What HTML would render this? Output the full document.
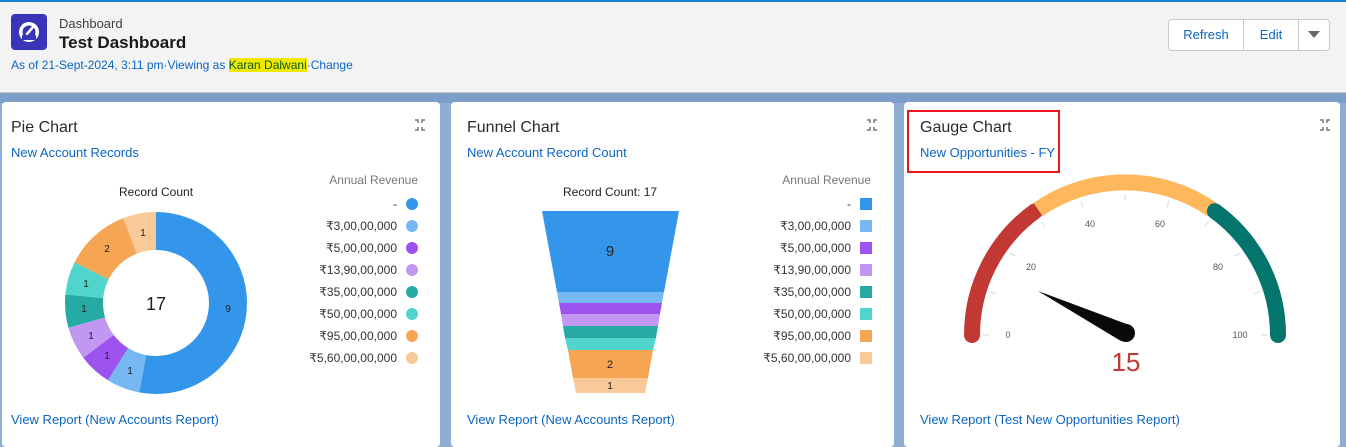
<!DOCTYPE html>
<html><head><meta charset="utf-8"><style>
*{margin:0;padding:0;box-sizing:border-box}
body{width:1346px;height:442px;overflow:hidden;background:#8eaed3;font-family:"Liberation Sans",Arial,sans-serif;position:relative}
.hdr{position:absolute;left:0;top:0;width:1346px;height:93px;background:#f3f3f3;border-top:2px solid #1b7fd6;border-bottom:1px solid #c9c9c9}
.band{position:absolute;left:0;top:93px;width:1346px;height:10px;background:#7c9ec8}
.card{position:absolute;top:102px;height:345px;background:#fff;border-radius:4px}
.t{position:absolute;font-size:16px;color:#2b2b2b}
.l{position:absolute;font-size:13px;color:#0b65c2}
.a{position:absolute;font-size:12px;color:#222}
.btn{position:absolute;top:17px;height:32px;border:1px solid #c9c9c9;background:#fff;color:#0b65c2;font-size:13px;text-align:center;line-height:30px}
</style></head><body>
<div class="hdr">
 <div style="position:absolute;left:11px;top:12px;width:36px;height:36px;background:#3934b8;border-radius:4px"></div>
 <svg style="position:absolute;left:11px;top:12px" width="36" height="36"><circle cx="18" cy="18" r="10" fill="#fff"/><circle cx="18" cy="18" r="6.5" fill="#3934b8"/><path d="M16 20 L22 13" stroke="#fff" stroke-width="2.5" stroke-linecap="round"/><rect x="11" y="21" width="14" height="5" fill="#3934b8"/></svg>
 <div style="position:absolute;left:59px;top:14px;font-size:13px;color:#3e3e3e">Dashboard</div>
 <div style="position:absolute;left:59px;top:31px;font-size:17px;font-weight:bold;color:#181818">Test Dashboard</div>
 <div style="position:absolute;left:11px;top:56px;font-size:12px;color:#0b65c2;white-space:nowrap">As of 21-Sept-2024, 3:11 pm·Viewing as <span style="background:#f0e800;color:#0a5a1a">Karan Dalwani</span>·Change</div>
 <div class="btn" style="left:1168px;width:76px;border-radius:4px 0 0 4px">Refresh</div>
 <div class="btn" style="left:1243px;width:56px">Edit</div>
 <div class="btn" style="left:1298px;width:32px;border-radius:0 4px 4px 0"><svg width="12" height="8" style="margin-top:11px;display:block;margin-left:9px"><path d="M0 0H12L6 7Z" fill="#666"/></svg></div>
</div>
<div class="band"></div>

<!-- Card 1 -->
<div class="card" style="left:2px;width:438px"></div>
<div class="t" style="left:11px;top:119px">Pie Chart</div>
<div class="l" style="left:11px;top:145px">New Account Records</div>
<div class="l" style="left:11px;top:412px">View Report (New Accounts Report)</div>
<div class="a" style="left:119px;top:185px">Record Count</div>
<svg style="position:absolute;left:0;top:0" width="1346" height="442">
 <g transform="rotate(-90 156 303)" fill="none" stroke-width="38">
  <circle cx="156" cy="303" r="72" stroke="#3496ea" stroke-dasharray="239.5 500"/>
  <circle cx="156" cy="303" r="72" stroke="#77b8f3" stroke-dasharray="26.6 500" stroke-dashoffset="-239.5"/>
  <circle cx="156" cy="303" r="72" stroke="#9c53ef" stroke-dasharray="26.6 500" stroke-dashoffset="-266.1"/>
  <circle cx="156" cy="303" r="72" stroke="#c297f2" stroke-dasharray="26.6 500" stroke-dashoffset="-292.7"/>
  <circle cx="156" cy="303" r="72" stroke="#25aba3" stroke-dasharray="26.6 500" stroke-dashoffset="-319.3"/>
  <circle cx="156" cy="303" r="72" stroke="#4fd5cb" stroke-dasharray="26.6 500" stroke-dashoffset="-345.9"/>
  <circle cx="156" cy="303" r="72" stroke="#f5a553" stroke-dasharray="53.2 500" stroke-dashoffset="-372.5"/>
  <circle cx="156" cy="303" r="72" stroke="#f9ca98" stroke-dasharray="26.7 500" stroke-dashoffset="-425.7"/>
 </g>
 <g font-size="10" fill="#222" text-anchor="middle" font-family="Liberation Sans">
  <text x="228" y="312">9</text><text x="130" y="374">1</text><text x="107" y="359">1</text><text x="91" y="339">1</text><text x="84" y="312">1</text><text x="86" y="287">1</text><text x="107" y="252">2</text><text x="143" y="236">1</text>
 </g>
 <text x="156" y="310" font-size="18" fill="#222" text-anchor="middle" font-family="Liberation Sans">17</text>
 <g font-size="12" fill="#333" text-anchor="end" font-family="Liberation Sans">
  <text x="418" y="184" fill="#777">Annual Revenue</text>
  <text x="397" y="208">-</text><text x="397" y="230">₹3,00,00,000</text><text x="397" y="252">₹5,00,00,000</text><text x="397" y="274">₹13,90,00,000</text><text x="397" y="296">₹35,00,00,000</text><text x="397" y="318">₹50,00,00,000</text><text x="397" y="340">₹95,00,00,000</text><text x="397" y="362">₹5,60,00,00,000</text>
 </g>
 <circle cx="412" cy="204" r="6" fill="#3496ea"/><circle cx="412" cy="226" r="6" fill="#77b8f3"/><circle cx="412" cy="248" r="6" fill="#9c53ef"/><circle cx="412" cy="270" r="6" fill="#c297f2"/><circle cx="412" cy="292" r="6" fill="#25aba3"/><circle cx="412" cy="314" r="6" fill="#4fd5cb"/><circle cx="412" cy="336" r="6" fill="#f5a553"/><circle cx="412" cy="358" r="6" fill="#f9ca98"/>
</svg>

<!-- Card 2 -->
<div class="card" style="left:451px;width:443px"></div>
<div class="t" style="left:467px;top:119px">Funnel Chart</div>
<div class="l" style="left:467px;top:145px">New Account Record Count</div>
<div class="l" style="left:467px;top:412px">View Report (New Accounts Report)</div>
<div class="a" style="left:563px;top:185px">Record Count: 17</div>
<svg style="position:absolute;left:0;top:0" width="1346" height="442">
 <polygon points="542,211 679,211 664,292 557,292" fill="#3496ea"/>
 <polygon points="557,292 664,292 662,303 559,303" fill="#77b8f3"/>
 <polygon points="559,303 662,303 660,314 561,314" fill="#9c53ef"/>
 <polygon points="561,314 660,314 658,326 563,326" fill="#c297f2"/>
 <polygon points="563,326 658,326 656,338 565,338" fill="#25aba3"/>
 <polygon points="565,338 656,338 653,350 568,350" fill="#4fd5cb"/>
 <polygon points="568,350 653,350 648,378 573,378" fill="#f5a553"/>
 <polygon points="573,378 648,378 645,393 576,393" fill="#f9ca98"/>
 <g fill="#222" text-anchor="middle" font-family="Liberation Sans">
  <text x="610" y="256" font-size="15">9</text><text x="610" y="368" font-size="11">2</text><text x="610" y="389" font-size="10">1</text>
 </g>
 <g font-size="12" fill="#333" text-anchor="end" font-family="Liberation Sans">
  <text x="871" y="184" fill="#777">Annual Revenue</text>
  <text x="851" y="208">-</text><text x="851" y="230">₹3,00,00,000</text><text x="851" y="252">₹5,00,00,000</text><text x="851" y="274">₹13,90,00,000</text><text x="851" y="296">₹35,00,00,000</text><text x="851" y="318">₹50,00,00,000</text><text x="851" y="340">₹95,00,00,000</text><text x="851" y="362">₹5,60,00,00,000</text>
 </g>
 <rect x="860" y="198" width="12" height="12" fill="#3496ea"/><rect x="860" y="220" width="12" height="12" fill="#77b8f3"/><rect x="860" y="242" width="12" height="12" fill="#9c53ef"/><rect x="860" y="264" width="12" height="12" fill="#c297f2"/><rect x="860" y="286" width="12" height="12" fill="#25aba3"/><rect x="860" y="308" width="12" height="12" fill="#4fd5cb"/><rect x="860" y="330" width="12" height="12" fill="#f5a553"/><rect x="860" y="352" width="12" height="12" fill="#f9ca98"/>
</svg>

<!-- Card 3 -->
<div class="card" style="left:904px;width:436px"></div>
<div style="position:absolute;left:907px;top:110px;width:153px;height:63px;border:2px solid #e8141e"></div>
<div class="t" style="left:920px;top:119px">Gauge Chart</div>
<div class="l" style="left:920px;top:145px">New Opportunities - FY</div>
<div class="l" style="left:920px;top:412px">View Report (Test New Opportunities Report)</div>
<svg style="position:absolute;left:0;top:0" width="1346" height="442">
 <path d="M972 335 A153 153 0 0 1 1035.1 211.2" fill="none" stroke="#c23934" stroke-width="16" stroke-linecap="round"/>
 <path d="M1038 209.5 A153 153 0 0 1 1212 209.5" fill="none" stroke="#ffb75d" stroke-width="16"/>
 <path d="M1214.9 211.2 A153 153 0 0 1 1278 335" fill="none" stroke="#04756c" stroke-width="16" stroke-linecap="round"/>
 <g stroke="#dde4ee" stroke-width="1.5">
  <path d="M983 335H989"/><path d="M990 292L996 294"/><path d="M1010 253L1015 256"/><path d="M1042 222L1045 227"/><path d="M1081 201L1083 207"/><path d="M1125 194V200"/><path d="M1169 201L1167 207"/><path d="M1208 222L1205 227"/><path d="M1240 253L1235 256"/><path d="M1260 292L1254 294"/><path d="M1267 335H1261"/>
 </g>
 <g font-size="9" fill="#555" text-anchor="middle" font-family="Liberation Sans">
  <text x="1008" y="338">0</text><text x="1031" y="270">20</text><text x="1090" y="227">40</text><text x="1160" y="227">60</text><text x="1218" y="270">80</text><text x="1240" y="338">100</text>
 </g>
 <polygon points="1038,291 1121.1,341.1 1128.9,324.9" fill="#0a0a0a"/>
 <circle cx="1126" cy="333" r="9" fill="#0a0a0a"/>
 <text x="1126" y="371" font-size="26" fill="#c23934" text-anchor="middle" font-family="Liberation Sans">15</text>
</svg>

<svg style="position:absolute;left:0;top:0" width="1346" height="442" stroke="#777" stroke-width="1.5" fill="none">
 <path d="M415 120h3v3M425 120h-3v3M415 130h3v-3M425 130h-3v-3"/>
 <path d="M867 120h3v3M877 120h-3v3M867 130h3v-3M877 130h-3v-3"/>
 <path d="M1320 120h3v3M1330 120h-3v3M1320 130h3v-3M1330 130h-3v-3"/>
</svg>
</body></html>
